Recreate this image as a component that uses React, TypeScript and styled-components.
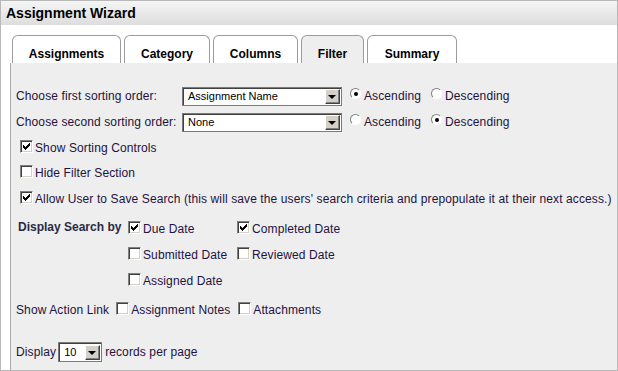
import React from 'react';
import styled, { createGlobalStyle } from 'styled-components';

const GlobalStyle = createGlobalStyle`
  html, body {
    margin: 0;
    padding: 0;
    background: #ffffff;
  }
  body {
    font-family: "Liberation Sans", Arial, sans-serif;
  }
`;

const Frame = styled.div`
  width: 618px;
  height: 371px;
  box-sizing: border-box;
  border: 1px solid #b8b8b8;
  display: flex;
  flex-direction: column;
  background: #ffffff;
`;

const Header = styled.div`
  flex: none;
  height: 24px;
  display: flex;
  align-items: center;
  padding-left: 5px;
  background: linear-gradient(#f5f5f5, #dddddd);
  font-size: 14px;
  font-weight: bold;
  color: #000000;
`;

const Body = styled.div`
  flex: 1;
  display: flex;
  flex-direction: column;
  padding: 10px 0 0 9px;
`;

const TabStrip = styled.div`
  display: flex;
  gap: 3px;
  padding-left: 2px;
`;

const Tab = styled.div<{ $w: number; $active?: boolean }>`
  width: ${(p) => p.$w}px;
  height: 28px;
  box-sizing: border-box;
  border: 1px solid #9c9c9c;
  border-bottom: none;
  border-radius: 6px 6px 0 0;
  background: ${(p) => (p.$active ? '#eeeeee' : '#ffffff')};
  display: flex;
  justify-content: center;
  align-items: center;
  padding-top: 8px;
  font-size: 12px;
  font-weight: bold;
  color: #000000;
`;

const Panel = styled.div`
  flex: 1;
  background: #eeeeee;
  border-left: 1px solid #a8a8a8;
  padding: 20px 0 0 5px;
  font-size: 12px;
  letter-spacing: 0.11px;
  color: #24123e;
`;

const Row = styled.div<{ $h: number }>`
  display: flex;
  align-items: center;
  height: ${(p) => p.$h}px;
  white-space: nowrap;
`;

const FieldLabel = styled.span`
  width: 166px;
  flex: none;
`;

const SelectBox = styled.div<{ $w: number; $h: number }>`
  width: ${(p) => p.$w}px;
  height: ${(p) => p.$h}px;
  box-sizing: border-box;
  border: 1px solid #7a7a7a;
  box-shadow: inset 1px 1px 0 #404040;
  background: #ffffff;
  display: flex;
  align-items: center;
  justify-content: space-between;
  padding: 0 1px 0 5px;
  font-size: 11px;
  letter-spacing: 0;
  color: #000000;
`;

const ArrowButton = styled.span`
  width: 15px;
  height: 15px;
  box-sizing: border-box;
  background: #d4d0c8;
  border-top: 1px solid #ffffff;
  border-left: 1px solid #ffffff;
  border-right: 1px solid #404040;
  border-bottom: 1px solid #404040;
  box-shadow: inset -1px -1px 0 #808080;
  display: flex;
  align-items: center;
  justify-content: center;

  &::after {
    content: '';
    border-left: 4px solid transparent;
    border-right: 4px solid transparent;
    border-top: 4px solid #000000;
    margin: 1px 1px 0 0;
  }
`;

const RadioGroup = styled.div`
  display: flex;
  align-items: center;
  margin-left: 8px;
`;

const RadioOption = styled.label`
  display: flex;
  align-items: center;
  margin-right: 10px;
`;

const RadioDot = styled.span<{ $on?: boolean }>`
  width: 11px;
  height: 11px;
  box-sizing: border-box;
  border-radius: 50%;
  border: 1px solid;
  border-color: #808080 #ffffff #ffffff #808080;
  background: #ffffff;
  margin: 0 3px 5px 0;
  display: flex;
  align-items: center;
  justify-content: center;

  &::after {
    content: '';
    width: 4px;
    height: 4px;
    border-radius: 50%;
    background: ${(p) => (p.$on ? '#000000' : 'transparent')};
  }
`;

const CheckOption = styled.label<{ $gap?: number }>`
  display: flex;
  align-items: center;
  margin-right: ${(p) => p.$gap ?? 0}px;
`;

const Box = styled.span`
  width: 13px;
  height: 13px;
  flex: none;
  box-sizing: border-box;
  border: 1px solid;
  border-color: #808080 #ffffff #ffffff #808080;
  box-shadow: inset 1px 1px 0 #404040, inset -1px -1px 0 #d4d0c8;
  background: #ffffff;
  margin: 0 2px 3px 0;
  display: flex;
  align-items: center;
  justify-content: center;
`;

const CheckRows = styled.div`
  padding-left: 4px;
`;

const SearchGrid = styled.div`
  display: grid;
  grid-template-columns: 110px 109px auto;
  grid-auto-rows: 26px;
  align-items: center;
  margin: 4px 0 3px 2px;
`;

const GridLabel = styled.span`
  font-weight: bold;
  letter-spacing: 0;
  color: #2a2a44;
  margin-bottom: 4px;
`;

const Spacer = styled.span<{ $w: number }>`
  width: ${(p) => p.$w}px;
  flex: none;
`;

const Tick = () => (
  <svg width="7" height="7" viewBox="0 0 7 7">
    <path d="M0 2h1v1h1v1h1v-1h1v-1h1v-1h1v-1h1v3h-1v1h-1v1h-1v1h-1v1h-1v-1h-1v-1h-1z" fill="#000" />
  </svg>
);

const Checkbox: React.FC<{ checked?: boolean; label: string; gap?: number }> = ({ checked, label, gap }) => (
  <CheckOption $gap={gap}>
    <Box>{checked && <Tick />}</Box>
    {label}
  </CheckOption>
);

const Radio: React.FC<{ on?: boolean; label: string }> = ({ on, label }) => (
  <RadioOption>
    <RadioDot $on={on} />
    {label}
  </RadioOption>
);

const tabs = [
  { name: 'Assignments', w: 109 },
  { name: 'Category', w: 86 },
  { name: 'Columns', w: 85 },
  { name: 'Filter', w: 63, active: true },
  { name: 'Summary', w: 90 },
];

const App: React.FC = () => {
  return (
    <>
      <GlobalStyle />
      <Frame>
        <Header>Assignment Wizard</Header>
        <Body>
          <TabStrip>
            {tabs.map((t) => (
              <Tab key={t.name} $w={t.w} $active={t.active}>
                {t.name}
              </Tab>
            ))}
          </TabStrip>
          <Panel>
            <Row $h={26}>
              <FieldLabel>Choose first sorting order:</FieldLabel>
              <SelectBox $w={160} $h={19}>
                Assignment Name
                <ArrowButton />
              </SelectBox>
              <RadioGroup>
                <Radio on label="Ascending" />
                <Radio label="Descending" />
              </RadioGroup>
            </Row>
            <Row $h={26}>
              <FieldLabel>Choose second sorting order:</FieldLabel>
              <SelectBox $w={160} $h={19}>
                None
                <ArrowButton />
              </SelectBox>
              <RadioGroup>
                <Radio label="Ascending" />
                <Radio on label="Descending" />
              </RadioGroup>
            </Row>
            <CheckRows>
              <Row $h={25}>
                <Checkbox checked label="Show Sorting Controls" />
              </Row>
              <Row $h={25}>
                <Checkbox label="Hide Filter Section" />
              </Row>
              <Row $h={27}>
                <Checkbox
                  checked
                  label="Allow User to Save Search (this will save the users' search criteria and prepopulate it at their next access.)"
                />
              </Row>
            </CheckRows>
            <SearchGrid>
              <GridLabel>Display Search by</GridLabel>
              <Checkbox checked label="Due Date" />
              <Checkbox checked label="Completed Date" />
              <span />
              <Checkbox label="Submitted Date" />
              <Checkbox label="Reviewed Date" />
              <span />
              <Checkbox label="Assigned Date" />
            </SearchGrid>
            <Row $h={26}>
              Show Action Link
              <Spacer $w={7} />
              <Checkbox label="Assignment Notes" gap={8} />
              <Checkbox label="Attachments" />
            </Row>
            <Row $h={16} />
            <Row $h={26}>
              Display
              <Spacer $w={2} />
              <SelectBox $w={44} $h={20}>
                10
                <ArrowButton />
              </SelectBox>
              <Spacer $w={3} />
              records per page
            </Row>
          </Panel>
        </Body>
      </Frame>
    </>
  );
};

export default App;
